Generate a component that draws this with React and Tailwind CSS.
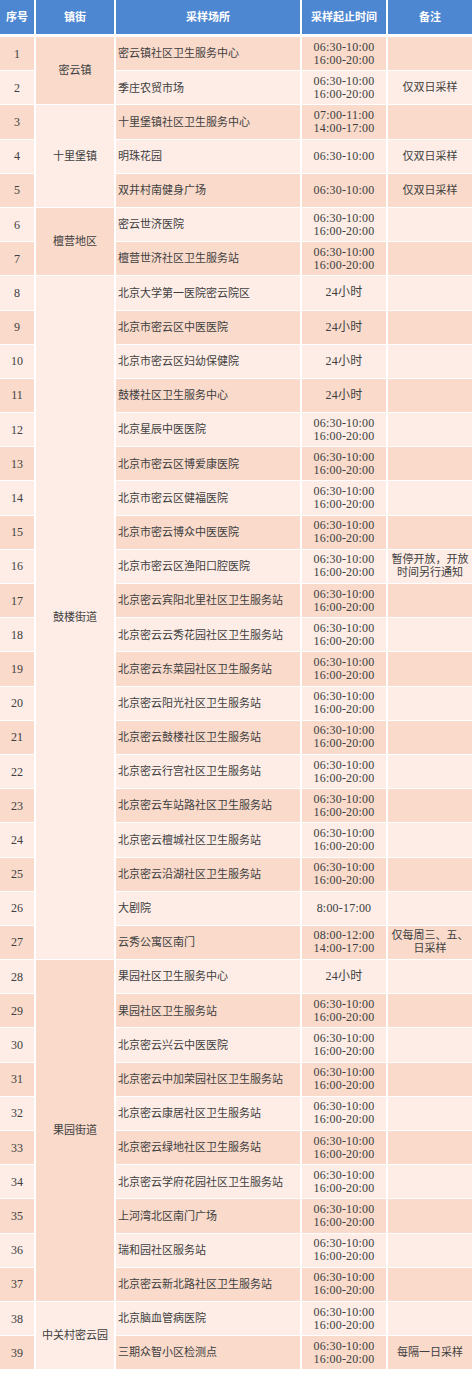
import React from "react";

const T1 = ["06:30-10:00", "16:00-20:00"];
const T2 = ["07:00-11:00", "14:00-17:00"];
const T3 = ["08:00-12:00", "14:00-17:00"];
const H24 = ["24小时"];

const rows = [
  { no: 1, place: "密云镇社区卫生服务中心", time: T1 },
  { no: 2, place: "季庄农贸市场", time: T1, note: ["仅双日采样"] },
  { no: 3, place: "十里堡镇社区卫生服务中心", time: T2 },
  { no: 4, place: "明珠花园", time: ["06:30-10:00"], note: ["仅双日采样"] },
  { no: 5, place: "双井村南健身广场", time: ["06:30-10:00"], note: ["仅双日采样"] },
  { no: 6, place: "密云世济医院", time: T1 },
  { no: 7, place: "檀营世济社区卫生服务站", time: T1 },
  { no: 8, place: "北京大学第一医院密云院区", time: H24 },
  { no: 9, place: "北京市密云区中医医院", time: H24 },
  { no: 10, place: "北京市密云区妇幼保健院", time: H24 },
  { no: 11, place: "鼓楼社区卫生服务中心", time: H24 },
  { no: 12, place: "北京星辰中医医院", time: T1 },
  { no: 13, place: "北京市密云区博爱康医院", time: T1 },
  { no: 14, place: "北京市密云区健福医院", time: T1 },
  { no: 15, place: "北京市密云博众中医医院", time: T1 },
  { no: 16, place: "北京市密云区渔阳口腔医院", time: T1, note: ["暂停开放，开放", "时间另行通知"] },
  { no: 17, place: "北京密云宾阳北里社区卫生服务站", time: T1 },
  { no: 18, place: "北京密云云秀花园社区卫生服务站", time: T1 },
  { no: 19, place: "北京密云东菜园社区卫生服务站", time: T1 },
  { no: 20, place: "北京密云阳光社区卫生服务站", time: T1 },
  { no: 21, place: "北京密云鼓楼社区卫生服务站", time: T1 },
  { no: 22, place: "北京密云行宫社区卫生服务站", time: T1 },
  { no: 23, place: "北京密云车站路社区卫生服务站", time: T1 },
  { no: 24, place: "北京密云檀城社区卫生服务站", time: T1 },
  { no: 25, place: "北京密云沿湖社区卫生服务站", time: T1 },
  { no: 26, place: "大剧院", time: ["8:00-17:00"] },
  { no: 27, place: "云秀公寓区南门", time: T3, note: ["仅每周三、五、", "日采样"] },
  { no: 28, place: "果园社区卫生服务中心", time: H24 },
  { no: 29, place: "果园社区卫生服务站", time: T1 },
  { no: 30, place: "北京密云兴云中医医院", time: T1 },
  { no: 31, place: "北京密云中加荣园社区卫生服务站", time: T1 },
  { no: 32, place: "北京密云康居社区卫生服务站", time: T1 },
  { no: 33, place: "北京密云绿地社区卫生服务站", time: T1 },
  { no: 34, place: "北京密云学府花园社区卫生服务站", time: T1 },
  { no: 35, place: "上河湾北区南门广场", time: T1 },
  { no: 36, place: "瑞和园社区服务站", time: T1 },
  { no: 37, place: "北京密云新北路社区卫生服务站", time: T1 },
  { no: 38, place: "北京脑血管病医院", time: T1 },
  { no: 39, place: "三期众智小区检测点", time: T1, note: ["每隔一日采样"] },
];

// 镇街 merged cells, keyed by first row
const groups = {
  1: { name: "密云镇", span: "row-span-2", bg: "bg-[#f9dacb]" },
  3: { name: "十里堡镇", span: "row-span-3", bg: "bg-[#fdede6]" },
  6: { name: "檀营地区", span: "row-span-2", bg: "bg-[#f9dacb]" },
  8: { name: "鼓楼街道", span: "row-span-20", bg: "bg-[#fdede6]" },
  28: { name: "果园街道", span: "row-span-10", bg: "bg-[#f9dacb]" },
  38: { name: "中关村密云园", span: "row-span-2", bg: "bg-[#fdede6]" },
};

const font = { fontFamily: '"Liberation Serif", "Noto Sans CJK SC", serif' };

function Lines({ items, className = "" }) {
  return (
    <div className={className}>
      {items.map((t) => (
        <div key={t}>{t}</div>
      ))}
    </div>
  );
}

export default function App() {
  return (
    <div className="w-[474px] bg-white" style={font}>
      <div className="w-[472px] grid grid-cols-[34px_78px_184px_84px_84px] gap-x-[2px] gap-y-px text-[11px] text-[#404040]">
        <div className="h-[34px] bg-[#4e87d1] text-white font-bold flex items-center justify-center">序号</div>
        <div className="h-[34px] bg-[#4e87d1] text-white font-bold flex items-center justify-center">镇街</div>
        <div className="h-[34px] bg-[#4e87d1] text-white font-bold flex items-center justify-center">采样场所</div>
        <div className="h-[34px] bg-[#4e87d1] text-white font-bold flex items-center justify-center">采样起止时间</div>
        <div className="h-[34px] bg-[#4e87d1] text-white font-bold flex items-center justify-center">备注</div>
        <div className="col-span-5 h-px" />

        {rows.map((r) => {
          const bg = r.no % 2 === 1 ? "bg-[#f9dacb]" : "bg-[#fdede6]";
          const g = groups[r.no];
          return (
            <React.Fragment key={r.no}>
              <div className={`col-start-1 h-[33.2px] ${bg} flex items-center justify-center text-[12px]`}>{r.no}</div>
              {g && (
                <div className={`col-start-2 ${g.span} ${g.bg} flex items-center justify-center`}>{g.name}</div>
              )}
              <div className={`col-start-3 h-[33.2px] ${bg} flex items-center pl-[2px]`}>{r.place}</div>
              <div className={`col-start-4 h-[33.2px] ${bg} flex items-center justify-center`}>
                <Lines items={r.time} className="text-center text-[12px] leading-[13px] tracking-[0.2px]" />
              </div>
              <div className={`col-start-5 h-[33.2px] ${bg} flex items-center justify-center`}>
                {r.note && <Lines items={r.note} className="text-center leading-[13px]" />}
              </div>
            </React.Fragment>
          );
        })}
      </div>
    </div>
  );
}
